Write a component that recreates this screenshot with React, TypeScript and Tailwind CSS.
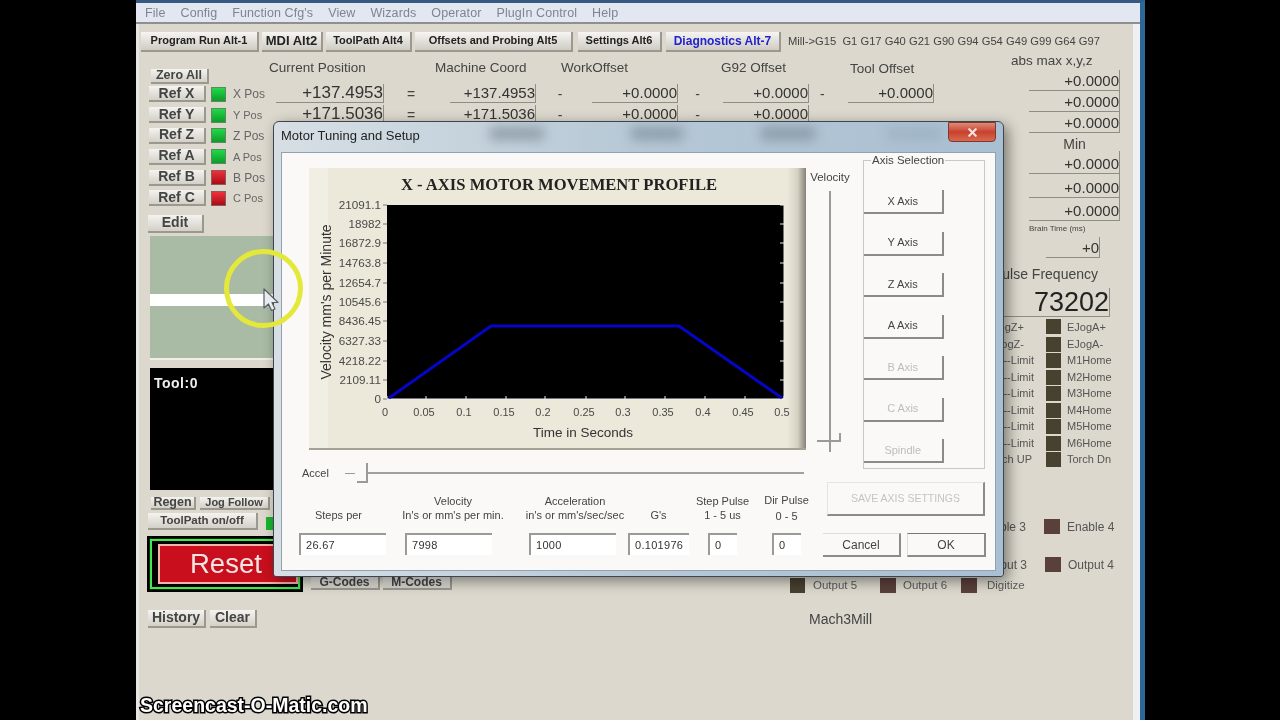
import { X } from 'lucide-react';

const btn = 'flex items-center justify-center bg-gradient-to-b from-[#f4f3ef] to-[#d3d0c8] border-r-2 border-b-2 border-[#9a988f] font-bold text-[#444] whitespace-nowrap';
const tab = 'flex items-center justify-center h-[20px] bg-gradient-to-b from-[#f6f5f1] to-[#cfccc4] border-r-2 border-b-2 border-[#9a988f] font-bold text-[#222] whitespace-nowrap';
const dlgBtn = 'flex items-center justify-center bg-[#fbf9f8] border-r-2 border-b-2 border-[#8b8b8b] whitespace-nowrap';
const input = 'flex items-center h-[22px] pl-[5px] bg-white border-l-2 border-t-2 border-[#9a9a98] text-[11px] text-[#333] tracking-[0.3px]';
const value = 'flex items-end justify-end border-b border-r border-[#8f8d85] text-[15px] leading-[18px] text-[#333]';

const menus = ['File', 'Config', "Function Cfg's", 'View', 'Wizards', 'Operator', 'PlugIn Control', 'Help'];

const tabs = [
  { name: 'Program Run Alt-1', w: 'w-[118px]', cls: 'text-[11px]' },
  { name: 'MDI Alt2', w: 'w-[61px]', cls: 'text-[13px]' },
  { name: 'ToolPath Alt4', w: 'w-[86px]', cls: 'text-[11px]' },
  { name: 'Offsets and Probing Alt5', w: 'w-[158px]', cls: 'text-[11px]' },
  { name: 'Settings Alt6', w: 'w-[84px] ml-[2px]', cls: 'text-[11px]' },
  { name: 'Diagnostics Alt-7', w: 'w-[115px] ml-[1px]', cls: 'text-[12px] !text-[#2222cc]' },
];

const dro = [
  { ref: 'Ref X', led: 'g', pos: 'X Pos', size: 'text-[12px]', cur: '+137.4953', mach: '+137.4953', work: '+0.0000', g92: '+0.0000', tool: '+0.0000' },
  { ref: 'Ref Y', led: 'g', pos: 'Y Pos', size: 'text-[11px]', cur: '+171.5036', mach: '+171.5036', work: '+0.0000', g92: '+0.0000', tool: '' },
  { ref: 'Ref Z', led: 'g', pos: 'Z Pos', size: 'text-[12px]' },
  { ref: 'Ref A', led: 'g', pos: 'A Pos', size: 'text-[11px]' },
  { ref: 'Ref B', led: 'r', pos: 'B Pos', size: 'text-[12px]' },
  { ref: 'Ref C', led: 'r', pos: 'C Pos', size: 'text-[11px]' },
];

const io = [
  { l: 'EJogZ+', r: 'EJogA+', pad: 'pr-[22px]', h: 'h-[18px]' },
  { l: 'EJogZ-', r: 'EJogA-', pad: 'pr-[22px]', h: 'h-[16.5px]' },
  { l: 'M1--Limit', r: 'M1Home', pad: 'pr-[12px]', h: 'h-[16.5px]' },
  { l: 'M2--Limit', r: 'M2Home', pad: 'pr-[12px]', h: 'h-[16.5px]' },
  { l: 'M3--Limit', r: 'M3Home', pad: 'pr-[12px]', h: 'h-[16.5px]' },
  { l: 'M4--Limit', r: 'M4Home', pad: 'pr-[12px]', h: 'h-[16.5px]' },
  { l: 'M5--Limit', r: 'M5Home', pad: 'pr-[12px]', h: 'h-[16.5px]' },
  { l: 'M6--Limit', r: 'M6Home', pad: 'pr-[12px]', h: 'h-[16.5px]' },
  { l: 'Torch UP', r: 'Torch Dn', pad: 'pr-[14px]', h: 'h-[16.5px]' },
];

const axes = [
  { name: 'X Axis', off: false },
  { name: 'Y Axis', off: false },
  { name: 'Z Axis', off: false },
  { name: 'A Axis', off: false },
  { name: 'B Axis', off: true },
  { name: 'C Axis', off: true },
  { name: 'Spindle', off: true },
];

function Led({ color }: { color: string }) {
  if (color === 'g') return <div className="w-[15px] h-[15px] shrink-0 border border-[#5c8a5c] bg-gradient-to-b from-[#22d84a] to-[#0d9c2a]" />;
  if (color === 'r') return <div className="w-[15px] h-[15px] shrink-0 border border-[#8a5c5c] bg-gradient-to-b from-[#f0303c] to-[#a80c14]" />;
  if (color === 'b') return <div className="w-[16px] h-[15px] shrink-0 bg-[#5a403a]" />;
  return <div className="w-[15px] h-[15px] shrink-0 bg-[#47412f]" />;
}

function Chart() {
  const yLabels = [
    ['21091.1', 205], ['18982', 224], ['16872.9', 243], ['14763.8', 263], ['12654.7', 283], ['10545.6', 302],
    ['8436.45', 321], ['6327.33', 341], ['4218.22', 361], ['2109.11', 380], ['0', 399],
  ] as const;
  const xLabels = [
    ['0', 385], ['0.05', 424], ['0.1', 464], ['0.15', 504], ['0.2', 543], ['0.25', 584],
    ['0.3', 623], ['0.35', 663], ['0.4', 703], ['0.45', 743], ['0.5', 782],
  ] as const;
  return (
    <svg width="497" height="282" viewBox="309 168 497 282" className="block shrink-0">
      <defs>
        <linearGradient id="edge" x1="0" x2="1" y1="0" y2="0">
          <stop offset="0" stopColor="#ece8da" />
          <stop offset="0.55" stopColor="#d6d2c3" />
          <stop offset="1" stopColor="#85827a" />
        </linearGradient>
      </defs>
      <rect x="309" y="168" width="497" height="282" fill="#ece8da" />
      <rect x="309" y="168" width="19" height="282" fill="#f1eee3" />
      <rect x="787" y="168" width="19" height="282" fill="url(#edge)" />
      <rect x="309" y="448" width="497" height="2" fill="#a5a294" />
      <text x="559" y="190" textAnchor="middle" fontFamily="'Liberation Serif', serif" fontWeight="700" fontSize="16.6" fill="#222">
        X - AXIS MOTOR MOVEMENT PROFILE
      </text>
      <rect x="387" y="205" width="397" height="194" fill="#000" />
      <line x1="784" y1="205" x2="784" y2="399" stroke="#eee" />
      <line x1="387" y1="399" x2="784" y2="399" stroke="#eee" />
      {yLabels.map(([t, y]) => <line key={t} x1="383" x2="387" y1={y} y2={y} stroke="#777" />)}
      {xLabels.map(([t, x]) => <line key={t} x1={x + 2} x2={x + 2} y1="396" y2="399" stroke="#eee" />)}
      {yLabels.map(([t, y]) => <line key={t} x1="780" x2="784" y1={y} y2={y} stroke="#eee" />)}
      <polyline points="389,398 491,326 679,326 782,398" fill="none" stroke="#0505c4" strokeWidth="3" />
      {yLabels.map(([t, y]) => (
        <text key={t} x="381" y={y + 4} textAnchor="end" fontFamily="'Liberation Sans', sans-serif" fontSize="11.7" fill="#4a4a4a">{t}</text>
      ))}
      {xLabels.map(([t, x]) => (
        <text key={t} x={x} y="416" textAnchor="middle" fontFamily="'Liberation Sans', sans-serif" fontSize="11" fill="#4a4a4a">{t}</text>
      ))}
      <text x="583" y="437" textAnchor="middle" fontFamily="'Liberation Sans', sans-serif" fontSize="13.5" fill="#333">Time in Seconds</text>
      <text transform="translate(331 302) rotate(-90)" textAnchor="middle" fontFamily="'Liberation Sans', sans-serif" fontSize="14" fill="#333">Velocity mm's per Minute</text>
    </svg>
  );
}

function Dialog() {
  return (
    <div className="absolute left-[273px] top-[121px] w-[731px] h-[456px] rounded-t-[6px] rounded-b-[3px] border border-[#3d4650] bg-gradient-to-r from-[#d7dfe4] via-[#b6c8d6] to-[#a9bfd2] shadow-[4px_4px_14px_rgba(0,0,0,0.45)] px-[7px] pb-[5px] flex flex-col overflow-hidden">
      <div className="relative h-[30px] shrink-0 flex items-center justify-between">
        <div className="absolute left-[209px] top-[5px] w-[54px] h-[13px] bg-[#7c8a96] blur-[6px] opacity-70" />
        <div className="absolute left-[350px] top-[5px] w-[52px] h-[13px] bg-[#7c8a96] blur-[6px] opacity-70" />
        <div className="absolute left-[480px] top-[5px] w-[54px] h-[13px] bg-[#7c8a96] blur-[6px] opacity-70" />
        <div className="absolute left-[606px] top-[5px] w-[54px] h-[13px] bg-[#93a6b6] blur-[6px] opacity-50" />
        <span className="relative text-[13px] text-[#222] pb-[2px]">Motor Tuning and Setup</span>
        <div className="relative self-start w-[48px] h-[20px] rounded-b-[4px] bg-gradient-to-b from-[#dc8a78] via-[#c8402c] to-[#d86a50] border border-[#7a3a30] flex items-center justify-center">
          <X size={13} strokeWidth={4} className="text-[#f4e4e0]" />
        </div>
      </div>

      <div className="flex-1 bg-[#fbf9f8] border border-[#8fa3b3] flex flex-col text-[#444]">
        <div className="flex pl-[27px] pt-[15px] h-[316px] shrink-0">
          <Chart />
          <div className="w-[48px] flex flex-col items-center pt-[1px]">
            <span className="text-[11.5px] leading-[16px]">Velocity</span>
            <div className="relative w-[2px] flex-1 mt-[6px] mb-[17px] bg-[#9a9a98]">
              <div className="absolute left-[-12px] top-[242px] w-[24px] h-[9px] border-r-2 border-b-2 border-[#9a9a98]" />
            </div>
          </div>
          <div className="relative w-[122px] h-[309px] ml-[9px] mt-[-8px] border border-[#c9c9c7] pt-[29px] flex flex-col gap-[17.5px]">
            <span className="absolute left-[7px] top-[-8px] px-[1px] bg-[#fbf9f8] text-[11.5px] leading-[15px]">Axis Selection</span>
            {axes.map((a) => (
              <div key={a.name} className={`${dlgBtn} w-[79.5px] h-[24px] text-[11px] ${a.off ? 'text-[#bdbdbd]' : 'text-[#444]'}`}>{a.name}</div>
            ))}
          </div>
        </div>

        <div className="flex flex-1">
          <div className="w-[533px] pl-[17px] flex flex-col">
            <div className="flex items-center h-[20px] mt-[-6px] pr-[11px]">
              <span className="w-[43px] ml-[3px] text-[11px]">Accel</span>
              <span className="w-[10px] h-[1px] bg-[#9a9a98]" />
              <span className="w-[11px] h-[20px] ml-[2px] border-r-2 border-b-2 border-[#9a9a98]" />
              <span className="flex-1 h-[2px] bg-[#a0a09e]" />
            </div>
            <div className="flex text-[11px] leading-[14px] text-center">
              <div className="w-[87px] flex flex-col items-center">
                <div className="h-[42px] mr-[8px] pb-[3px] flex items-end whitespace-nowrap">Steps per</div>
                <div className={`${input} mt-[8px] w-full`}>26.67</div>
              </div>
              <div className="w-[87px] ml-[19px] flex flex-col items-center">
                <div className="h-[42px] ml-[9px] pb-[3px] flex items-end whitespace-nowrap">Velocity<br />In's or mm's per min.</div>
                <div className={`${input} mt-[8px] w-full`}>7998</div>
              </div>
              <div className="w-[87px] ml-[37px] flex flex-col items-center">
                <div className="h-[42px] ml-[5px] pb-[3px] flex items-end whitespace-nowrap">Acceleration<br />in's or mm's/sec/sec</div>
                <div className={`${input} mt-[8px] w-full`}>1000</div>
              </div>
              <div className="w-[61px] ml-[12px] flex flex-col items-center">
                <div className="h-[42px] pb-[3px] flex items-end whitespace-nowrap">G's</div>
                <div className={`${input} mt-[8px] w-full`}>0.101976</div>
              </div>
              <div className="w-[29px] ml-[19px] flex flex-col items-center">
                <div className="h-[42px] pb-[3px] flex items-end whitespace-nowrap">Step Pulse<br />1 - 5 us</div>
                <div className={`${input} mt-[8px] w-full`}>0</div>
              </div>
              <div className="w-[29px] ml-[35px] flex flex-col items-center">
                <div className="h-[42px] pb-[1px] leading-[16px] flex items-end whitespace-nowrap">Dir Pulse<br />0 - 5</div>
                <div className={`${input} mt-[8px] w-full`}>0</div>
              </div>
            </div>
          </div>

          <div className="flex-1 pl-[8px] pt-[13px]">
            <div className={`${dlgBtn} ml-[4px] w-[158px] h-[34px] text-[10.5px] text-[#c4c4c4] border-t border-l border-t-[#e4e4e2] border-l-[#e4e4e2]`}>SAVE AXIS SETTINGS</div>
            <div className="flex mt-[17px] gap-[6px]">
              <div className={`${dlgBtn} w-[78px] h-[24px] text-[12px] border-t border-t-[#dddddd]`}>Cancel</div>
              <div className={`${dlgBtn} w-[79px] h-[24px] text-[12px] border-t border-l border-t-[#777777] border-l-[#dddddd]`}>OK</div>
            </div>
          </div>
        </div>
      </div>
    </div>
  );
}

export default function App() {
  return (
    <div className="relative w-[1280px] h-[720px] bg-black overflow-hidden flex font-['Liberation_Sans',sans-serif] blur-[0.4px]">
      <div className="w-[136px] shrink-0" />
      <div className="w-[1009px] flex flex-col bg-[#dcd8cd] border-t-[3px] border-r-[5px] border-t-[#345a82] border-r-[#2c6797]">
        <div className="h-[21px] shrink-0 bg-[#e3e7f2] flex items-center gap-[15px] pl-[9px] pt-[2px] text-[12.5px] tracking-[0.1px] text-[#7d8591] border-b-2 border-[#8f8f90]">
          {menus.map((m) => <span key={m}>{m}</span>)}
        </div>

        <div className="flex-1 flex flex-col min-h-0 border-l-[3px] border-r-[7px] border-l-[#e6e6e4] border-r-[#eef0f4]">
          <div className="flex items-center gap-[3px] pl-[2px] pt-[7px] h-[28px] shrink-0">
            {tabs.map((t) => <div key={t.name} className={`${tab} ${t.w} ${t.cls}`}>{t.name}</div>)}
            <span className="ml-[4px] text-[11.2px] text-[#444] whitespace-pre">Mill-&gt;G15  G1 G17 G40 G21 G90 G94 G54 G49 G99 G64 G97</span>
          </div>

          <div className="flex flex-1 min-h-0">
            <div className="w-[861px] shrink-0 flex flex-col">
              <div className="grid grid-cols-[137px_108px_66px_86px_56px_86px_45px_86px_39px_86px] grid-rows-[23px] auto-rows-[20.8px] mt-[9px] text-[#444]">
                <div className="flex items-end">
                  <div className={`${btn} ml-[12px] w-[58px] h-[15px] text-[12.5px]`}>Zero All</div>
                </div>
                <div className="mt-[-3px] ml-[-7px] text-[13.5px] whitespace-nowrap">Current Position</div>
                <div />
                <div className="mt-[-3px] ml-[-15px] text-[13.5px] whitespace-nowrap">Machine Coord</div>
                <div />
                <div className="mt-[-3px] ml-[-31px] text-[13.5px] whitespace-nowrap">WorkOffset</div>
                <div />
                <div className="mt-[-3px] ml-[-2px] text-[13.5px] whitespace-nowrap">G92 Offset</div>
                <div />
                <div className="mt-[-2px] ml-[2px] text-[13.5px] whitespace-nowrap">Tool Offset</div>

                {dro.map((d) => (
                  <div key={d.ref} className="contents">
                    <div className="flex items-center">
                      <div className={`${btn} ml-[10px] w-[57px] h-[16px] text-[14px]`}>{d.ref}</div>
                      <div className="ml-[5px]"><Led color={d.led} /></div>
                      <span className={`ml-[7px] ${d.size} text-[#666] whitespace-nowrap`}>{d.pos}</span>
                    </div>
                    {d.cur ? <div className={`${value} h-[19px] !text-[17px]`}>{d.cur}</div> : <div />}
                    <div className="flex justify-center text-[14px] mr-[12px]">{d.cur ? '=' : ''}</div>
                    {d.mach ? <div className={`${value} h-[19px]`}>{d.mach}</div> : <div />}
                    <div className="flex justify-center text-[14px] mr-[8px]">{d.cur ? '-' : ''}</div>
                    {d.work ? <div className={`${value} h-[19px]`}>{d.work}</div> : <div />}
                    <div className="flex justify-center text-[14px] mr-[6px]">{d.cur ? '-' : ''}</div>
                    {d.g92 ? <div className={`${value} h-[19px]`}>{d.g92}</div> : <div />}
                    <div className="text-[14px] ml-[11px]">{d.tool ? '-' : ''}</div>
                    {d.tool ? <div className={`${value} h-[19px]`}>{d.tool}</div> : <div />}
                  </div>
                ))}
              </div>

              <div className="flex mt-[6px]">
                <div className="w-[165px] shrink-0 pl-[9px] flex flex-col">
                  <div className={`${btn} w-[56px] h-[18px] text-[14px]`}>Edit</div>
                  <div className="ml-[2px] mt-[3px] h-[124px] w-[136px] bg-[#a9bba4] border-b-2 border-[#f0eee8] flex flex-col justify-center">
                    <div className="h-[12px] bg-white mt-[6px]" />
                  </div>
                  <div className="ml-[2px] mt-[8px] h-[122px] w-[136px] bg-black pl-[4px] pt-[5px] text-[14px] font-bold tracking-[0.5px] text-[#eee]">Tool:0</div>
                  <div className="flex mt-[7px] items-start">
                    <div className={`${btn} ml-[3px] w-[45px] h-[13px] text-[12.5px]`}>Regen</div>
                    <div className={`${btn} ml-[4px] w-[70px] h-[13px] text-[11px]`}>Jog Follow</div>
                  </div>
                  <div className="flex mt-[3px] items-end">
                    <div className={`${btn} w-[110px] h-[17px] text-[11.5px]`}>ToolPath on/off</div>
                    <div className="ml-[8px] w-[16px] h-[13px] bg-[#17b52e]" />
                  </div>
                  <div className="mt-[6px] ml-[-1px] w-[156px] h-[56px] shrink-0 bg-[#0a2a10] border-2 border-black p-[1px]">
                    <div className="h-full border-2 border-[#45e84a] bg-black pl-[6px] py-[3px]">
                      <div className="h-full bg-[#c90f1d] border-2 border-[#f5b5ac] flex items-center pl-[30px] text-[27.5px] text-[#f2e4e0]">Reset</div>
                    </div>
                  </div>
                  <div className="flex gap-[4px] mt-[18px]">
                    <div className={`${btn} w-[58px] h-[18px] text-[14px]`}>History</div>
                    <div className={`${btn} w-[47px] h-[18px] text-[14px]`}>Clear</div>
                  </div>
                </div>

                <div className="flex-1 flex flex-col">
                  <div className="flex mt-[361px] h-[22px] items-start">
                    <div className={`${btn} ml-[7px] w-[69px] h-[14px] text-[12px]`}>G-Codes</div>
                    <div className={`${btn} ml-[3px] w-[69px] h-[14px] text-[12px]`}>M-Codes</div>
                    <div className="ml-[338px] mt-[1px] flex items-center text-[11.5px] text-[#5a5a5a] whitespace-nowrap">
                      <Led color="d" />
                      <span className="ml-[8px] w-[67px]">Output 5</span>
                      <Led color="b" />
                      <span className="ml-[7px] w-[58px]">Output 6</span>
                      <Led color="b" />
                      <span className="ml-[10px]">Digitize</span>
                    </div>
                  </div>
                  <div className="ml-[505px] mt-[11px] text-[14px] text-[#444]">Mach3Mill</div>
                </div>
              </div>
            </div>

            <div className="flex-1 flex flex-col text-[#444]">
              <div className="pl-[11px] text-[13.5px] h-[18px] leading-[18px] whitespace-nowrap">abs max x,y,z</div>
              <div className="ml-[29px] w-[91px] flex flex-col">
                {['+0.0000', '+0.0000', '+0.0000'].map((v, i) => <div key={i} className={`${value} h-[21px]`}>{v}</div>)}
                <div className="h-[18px] pt-[3px] text-center text-[14px] leading-[16px]">Min</div>
                {['+0.0000', '+0.0000', '+0.0000'].map((v, i) => <div key={i} className={`${value} h-[23.3px]`}>{v}</div>)}
                <div className="h-[14px] text-[8px] leading-[12px] whitespace-nowrap mt-[2px]">Brain Time (ms)</div>
              </div>
              <div className={`${value} ml-[46px] w-[54px] h-[21px]`}>+0</div>
              <div className="mt-[6px] h-[20px] w-[98px] flex justify-end text-[14px] whitespace-nowrap">Pulse Frequency</div>
              <div className="mt-[4px] w-[110px] h-[29px] flex items-end justify-end border-b border-r border-[#8f8d85] text-[27px] leading-[28px] text-[#222]">73202</div>
              <div className="flex flex-col mt-[1px]">
                {io.map((r) => (
                  <div key={r.r} className={`flex items-center ${r.h}`}>
                    <div className={`w-[46px] flex justify-end whitespace-nowrap text-[11px] text-[#555] ${r.pad}`}>{r.l}</div>
                    <Led color="d" />
                    <span className="ml-[6px] text-[11px] text-[#555] whitespace-nowrap">{r.r}</span>
                  </div>
                ))}
              </div>
              <div className="flex items-center mt-[51px] h-[16px] text-[12px] text-[#555] whitespace-nowrap">
                <div className="w-[44px] flex justify-end pr-[18px]">Enable 3</div>
                <Led color="b" />
                <span className="ml-[7px]">Enable 4</span>
              </div>
              <div className="flex items-center mt-[22px] h-[16px] text-[12px] text-[#555] whitespace-nowrap">
                <div className="w-[45px] flex justify-end pr-[18px]">Output 3</div>
                <Led color="b" />
                <span className="ml-[7px]">Output 4</span>
              </div>
            </div>
          </div>
        </div>
      </div>

      <Dialog />

      <div className="absolute left-[224px] top-[249px] w-[79px] h-[79px] rounded-full border-[5px] border-[#e3e83a]" />
      <svg className="absolute left-[262px] top-[288px]" width="18" height="24" viewBox="0 0 18 24">
        <path d="M2 1 L2 20 L6.5 16 L9.5 22.5 L13 21 L10 14.5 L16 14.5 Z" fill="#e8ecf0" stroke="#5a5e63" strokeWidth="1.2" strokeLinejoin="round" />
      </svg>
      <div className="absolute left-[140px] top-[694px] text-[19.5px] leading-[22px] font-bold text-white whitespace-nowrap [-webkit-text-stroke:3px_#000] [paint-order:stroke_fill]">Screencast-O-Matic.com</div>
    </div>
  );
}
